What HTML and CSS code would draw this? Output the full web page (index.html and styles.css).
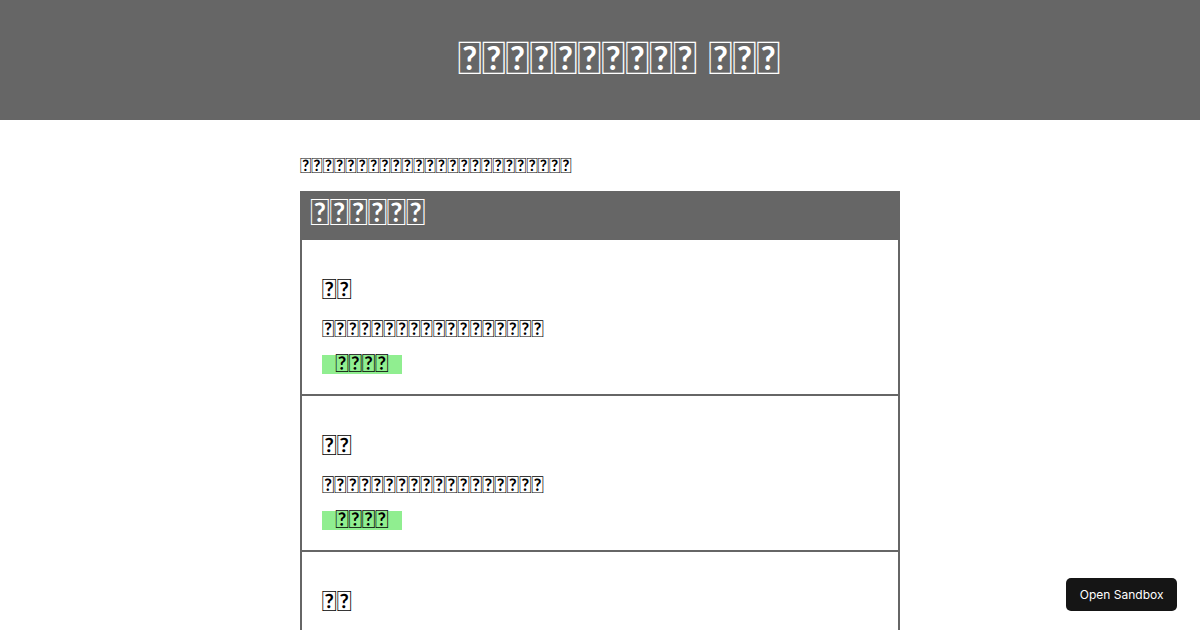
FILE: index.html
```html
<!DOCTYPE html>
<html lang="zh">
<head>
<meta charset="utf-8">
<title>Store</title>
<link rel="stylesheet" href="styles.css">
</head>
<body>
<header class="site-header">
  <h1 class="site-title">&#xE101;&#xE102;&#xE103;&#xE104;&#xE105;&#xE106;&#xE107;&#xE108;&#xE109;&#xE10A; &#xE10B;&#xE10C;&#xE10D;</h1>
</header>
<main class="content">
  <p class="intro">&#xE111;&#xE112;&#xE113;&#xE114;&#xE115;&#xE116;&#xE117;&#xE118;&#xE119;&#xE11A;&#xE11B;&#xE11C;&#xE11D;&#xE11E;&#xE11F;&#xE120;&#xE121;&#xE122;&#xE123;&#xE124;&#xE125;&#xE126;&#xE127;&#xE128;</p>
  <section class="list">
    <h2 class="list-title">&#xE131;&#xE132;&#xE133;&#xE134;&#xE135;&#xE136;</h2>
    <div class="item">
      <h3 class="item-name">&#xE141;&#xE142;</h3>
      <p class="item-desc">&#xE151;&#xE152;&#xE153;&#xE154;&#xE155;&#xE156;&#xE157;&#xE158;&#xE159;&#xE15A;&#xE15B;&#xE15C;&#xE15D;&#xE15E;&#xE15F;&#xE160;&#xE161;&#xE162;</p>
      <span class="badge">&#xE171;&#xE172;&#xE173;&#xE174;</span>
    </div>
    <div class="item">
      <h3 class="item-name">&#xE143;&#xE144;</h3>
      <p class="item-desc">&#xE163;&#xE164;&#xE165;&#xE166;&#xE167;&#xE168;&#xE169;&#xE16A;&#xE16B;&#xE16C;&#xE16D;&#xE16E;&#xE16F;&#xE170;&#xE175;&#xE176;&#xE177;&#xE178;</p>
      <span class="badge">&#xE171;&#xE172;&#xE173;&#xE174;</span>
    </div>
    <div class="item">
      <h3 class="item-name">&#xE145;&#xE146;</h3>
      <p class="item-desc">&#xE181;&#xE182;&#xE183;&#xE184;&#xE185;&#xE186;&#xE187;&#xE188;&#xE189;&#xE18A;&#xE18B;&#xE18C;&#xE18D;&#xE18E;&#xE18F;&#xE190;&#xE191;&#xE192;</p>
      <span class="badge">&#xE171;&#xE172;&#xE173;&#xE174;</span>
    </div>
  </section>
</main>
<a class="sandbox-btn" href="#">Open Sandbox</a>
</body>
</html>
```
FILE: styles.css
```css
html, body {
  margin: 0;
  padding: 0;
}
body {
  font-family: Lato, sans-serif;
  color: #000;
  background: #fff;
}
.site-header {
  background: #666666;
  color: #fff;
  height: 120px;
  display: flex;
  align-items: center;
  justify-content: center;
}
.site-title {
  margin: 0;
  padding: 0 0 6px 38px;
  font-size: 45px;
  font-weight: normal;
  line-height: 40px;
}
.content {
  width: 600px;
  margin: 0 auto;
}
.intro {
  margin: 35px 0 16px;
  font-size: 21.3px;
  line-height: 20px;
}
.list {
  display: flex;
  flex-direction: column;
}
.list-title {
  margin: 0;
  background: #666666;
  color: #fff;
  height: 41px;
  line-height: 41px;
  padding: 0 10px 8px;
  font-size: 36px;
  font-weight: normal;
}
.item {
  display: flex;
  flex-direction: column;
  align-items: flex-start;
  border: 2px solid #666666;
  border-top: none;
  padding: 40px 20px 20px;
}
.item-name {
  margin: 0 0 21px;
  font-size: 28px;
  line-height: 17px;
  font-weight: normal;
}
.item-desc {
  margin: 0 0 17px;
  font-size: 23.2px;
  line-height: 20px;
}
.badge {
  display: block;
  background: #90ee90;
  padding: 0 13.5px 4px;
  height: 15px;
  line-height: 15px;
  font-size: 25px;
}
.sandbox-btn {
  position: fixed;
  right: 23px;
  bottom: 19px;
  background: #151515;
  color: #fff;
  font-family: Inter, "Liberation Sans", sans-serif;
  font-size: 12px;
  text-decoration: none;
  padding: 0 13.5px;
  height: 33px;
  line-height: 33px;
  border-radius: 5px;
}
```
